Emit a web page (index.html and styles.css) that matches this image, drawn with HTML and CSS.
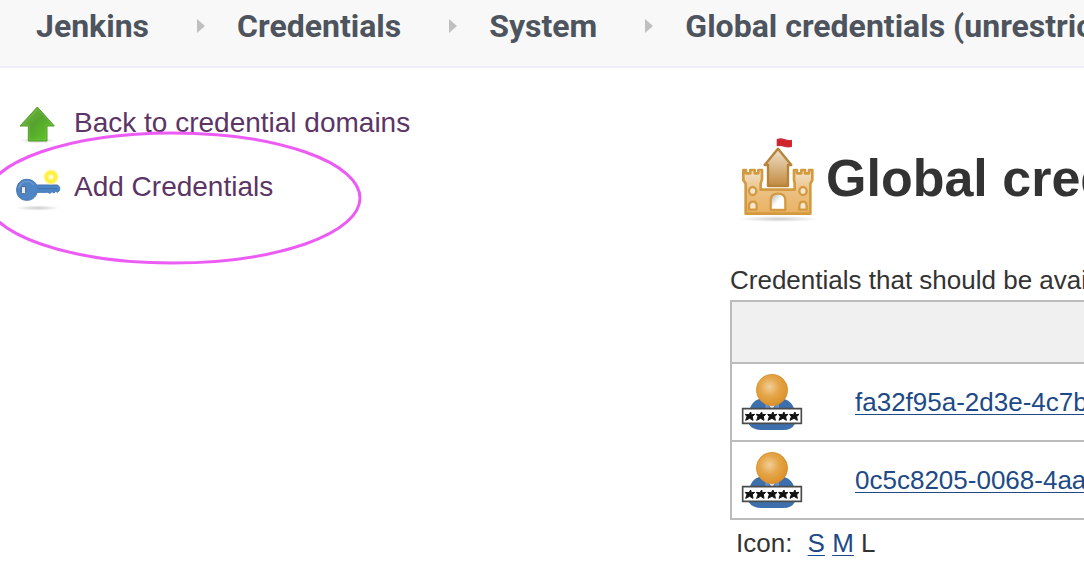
FILE: index.html
```html
<!DOCTYPE html>
<html lang="en">
<head>
<meta charset="utf-8">
<title>Global credentials (unrestricted) [Jenkins]</title>
<link rel="stylesheet" href="styles.css">
</head>
<body>
<svg class="defs" width="0" height="0" aria-hidden="true">
  <defs>
    <linearGradient id="green" x1="0" y1="0" x2="1" y2="1"><stop offset="0" stop-color="#7fc04c"/><stop offset=".45" stop-color="#55a32d"/><stop offset="1" stop-color="#62cc25"/></linearGradient>
    <radialGradient id="shade"><stop offset="0" stop-color="#000" stop-opacity=".2"/><stop offset="1" stop-color="#000" stop-opacity="0"/></radialGradient>
    <radialGradient id="glow"><stop offset="0" stop-color="#fffef0"/><stop offset=".25" stop-color="#fffbb0"/><stop offset=".45" stop-color="#fff03a"/><stop offset=".75" stop-color="#fff250"/><stop offset="1" stop-color="#fff66a" stop-opacity="0"/></radialGradient>
    <linearGradient id="tower" x1="0" y1="0" x2="0" y2="1"><stop offset="0" stop-color="#efe2cd"/><stop offset="1" stop-color="#c38a3e"/></linearGradient>
    <linearGradient id="wall" x1="0" y1="0" x2="0" y2="1"><stop offset="0" stop-color="#f1e2cc"/><stop offset=".5" stop-color="#ebc080"/><stop offset="1" stop-color="#e9b263"/></linearGradient>
    <linearGradient id="door" x1="0" y1="0" x2="1" y2="1"><stop offset="0" stop-color="#a9adb0"/><stop offset=".5" stop-color="#fff"/></linearGradient>
    <radialGradient id="head" cx=".42" cy=".4" r=".6"><stop offset="0" stop-color="#f1cf99"/><stop offset=".5" stop-color="#e5a64a"/><stop offset="1" stop-color="#dc922a"/></radialGradient>
    <symbol id="user" viewBox="15 15 192 192">
      <path d="M42 178C38 140 44 112 72 102H148C178 112 184 142 180 176Q170 195 145 195H76Q51 194 42 178Z" fill="#3d6fad"/>
      <path d="M91 108L111 138L132 108V130H91Z" fill="#6b91c2"/>
      <path d="M101 120H121L111 133Z" fill="#e6e2d8"/>
      <circle cx="111" cy="75" r="47" fill="url(#head)" stroke="#d28b2c" stroke-width="2"/>
      <path d="M23 131H199V175H23Z" fill="#fff" stroke="#4b4b4b" stroke-width="5"/>
      <g fill="#111" stroke="#111" stroke-width="3" stroke-linejoin="round">
        <path id="star" d="M47 141L49 149L59 148L52 155L54 166L44 160L32 166L36 155L31 148L42 149Z"/>
        <use href="#star" x="33"/><use href="#star" x="67"/><use href="#star" x="100"/><use href="#star" x="133"/>
      </g>
    </symbol>
  </defs>
</svg>

<nav class="breadcrumbs" aria-label="Breadcrumb">
  <a href="#">Jenkins</a><span class="arrow"></span>
  <a href="#">Credentials</a><span class="arrow"></span>
  <a href="#">System</a><span class="arrow"></span>
  <a href="#">Global credentials (unrestricted)</a>
</nav>

<div class="page">
  <aside class="side">
    <a class="task" href="#">
      <svg class="task-icon" viewBox="12 12 144 144" aria-hidden="true">
        <ellipse cx="82" cy="137" rx="54" ry="9" fill="url(#shade)"/>
        <path d="M82 36L133 93H111V138H55V93H30Z" fill="url(#green)" stroke="#4f9c2b" stroke-width="3" stroke-linejoin="round"/>
        <path d="M82 42L126 90H108V134H58V90H38Z" fill="none" stroke="#83cc52" stroke-width="2" opacity=".6"/>
      </svg>
      <span>Back to credential domains</span>
    </a>
    <a class="task" href="#">
      <svg class="task-icon" viewBox="12 204 144 144" aria-hidden="true">
        <ellipse cx="83" cy="339" rx="66" ry="8" fill="url(#shade)"/>
        <path d="M50 253C68 253 76 263 80 270H143L149 277V285L143 292L137 289L132 294L126 290L120 295L113 292H82C76 308 66 316 50 316C31 316 20 302 20 285S31 253 50 253Z" fill="#4e85c4" stroke="#4376b4" stroke-width="3" stroke-linejoin="round"/>
        <path d="M82 281H142" stroke="#3e70ae" stroke-width="3"/>
        <path d="M26 278Q34 259 52 259Q65 260 71 270" fill="none" stroke="#6d9bd2" stroke-width="4"/>
        <rect x="34" y="275" width="13" height="21" rx="3" fill="#e9edf0" stroke="#45617f" stroke-width="3"/>
        <circle cx="123" cy="246" r="24" fill="url(#glow)"/>
      </svg>
      <span>Add Credentials</span>
    </a>
    <svg class="marker" viewBox="0 0 378 134" aria-hidden="true"><ellipse cx="189" cy="67" rx="187" ry="65"/></svg>
  </aside>

  <main class="main">
    <div class="title">
      <svg class="castle" viewBox="0 0 288 288" aria-hidden="true">
        <ellipse cx="145" cy="267" rx="122" ry="9" fill="url(#shade)"/>
        <path d="M142 29Q151 25 163 29T184 31V49Q174 52 162 48T142 47Z" fill="#d3222a" stroke="#c9303a" stroke-width="4" stroke-linejoin="round"/>
        <g stroke="#d39a40" stroke-width="8" stroke-linejoin="round">
          <path d="M40 120H48V130H61V120H74V130H85V120H96V149L92 160V179H194V160L192 149V120H201V130H214V120H225V130H237V120H247V150L241 161V251H47V161L40 150Z" fill="url(#wall)"/>
          <path d="M144 56L184 105H174V168H114V105H104Z" fill="url(#tower)" stroke="#b78338" stroke-width="7"/>
          <path d="M122 240V211Q122 191 144 191T166 211V240Z" fill="url(#door)" stroke-width="7"/>
          <g fill="#f4e6d0" stroke-width="7">
            <ellipse cx="68" cy="183" rx="11" ry="12"/><ellipse cx="219" cy="183" rx="11" ry="12"/>
            <path d="M57 239V227Q58 215 69 215T80 227V239ZM208 239V227Q209 215 219 215T230 227V239Z"/>
          </g>
        </g>
      </svg>
      <h1>Global credentials (unrestricted)</h1>
    </div>
    <p class="description">Credentials that should be available</p>
    <table class="credentials">
      <thead><tr><th></th><th></th></tr></thead>
      <tbody>
        <tr><td class="kind"><svg class="user" aria-hidden="true"><use href="#user"/></svg></td><td class="name"><a href="#">fa32f95a-2d3e-4c7b</a></td></tr>
        <tr><td class="kind"><svg class="user" aria-hidden="true"><use href="#user"/></svg></td><td class="name"><a href="#">0c5c8205-0068-4aa</a></td></tr>
      </tbody>
    </table>
    <div class="sizes"><span class="label">Icon:</span> <a href="#">S</a> <a href="#">M</a> <span>L</span></div>
  </main>
</div>
</body>
</html>
```

FILE: styles.css
```css
* { box-sizing: border-box; }

body {
  margin: 0;
  overflow-x: hidden;
  background: #fff;
  color: #333;
  font: 26px/32px "Liberation Sans", Arial, sans-serif;
  white-space: nowrap;
}

.defs { position: absolute; }

.breadcrumbs {
  display: flex;
  align-items: center;
  padding: 6px 36px 20px;
  background: #f8f8f8;
  border-bottom: 2px solid #ecf0f4;
  font: bold 32px/40px Roboto, sans-serif;
  overflow: hidden;
}
.breadcrumbs a { color: #4d545d; text-decoration: none; }
.arrow {
  flex: none;
  margin: 0 32px 0 48px;
  border: solid transparent;
  border-width: 7px 0 7px 8px;
  border-left-color: #c0c0c0;
}

.page { display: flex; overflow: hidden; }

.side {
  position: relative;
  flex: 0 0 730px;
  display: flex;
  flex-direction: column;
  align-items: flex-start;
  gap: 16px;
  padding: 31px 14px;
}
.task {
  display: flex;
  align-items: center;
  gap: 12px;
  color: #5c3566;
  font-size: 28px;
  line-height: 34px;
  text-decoration: none;
}
.task-icon { width: 48px; height: 48px; }

.marker {
  position: absolute;
  top: 63px;
  left: -16px;
  width: 378px;
  height: 134px;
  pointer-events: none;
}
.marker ellipse { fill: none; stroke: #ec5cf5; stroke-width: 3; }

.main { flex: 1; min-width: 0; padding: 62px 0 8px; }

.title { display: flex; align-items: center; }
.castle { flex: none; width: 96px; height: 96px; }
h1 { margin: 0; font-size: 52px; line-height: 60px; }

.description { margin: 38px 0 4px; }

.credentials { min-width: 800px; border: 2px solid #bbb; border-spacing: 0; }
.credentials th { height: 60px; padding: 0; background: #f0f0f0; }
.credentials td { padding: 6px 8px; border-top: 2px solid #bbb; }
.credentials .kind { width: 80px; }
.credentials .name { padding-left: 43px; }
.user { display: block; width: 64px; height: 64px; }

a { color: #204a87; text-decoration-thickness: 1px; text-underline-offset: 3px; }

.sizes { padding: 7px 6px; }
.sizes .label { margin-right: 8px; }
```
